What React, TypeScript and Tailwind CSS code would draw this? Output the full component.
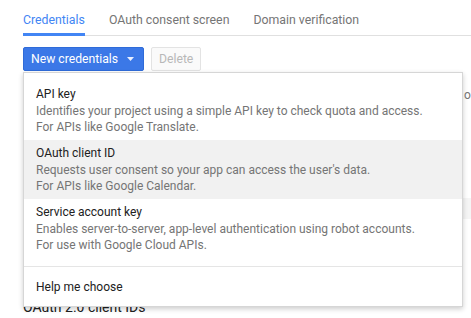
import React from "react";

const items = [
  {
    title: "API key",
    lines: [
      "Identifies your project using a simple API key to check quota and access.",
      "For APIs like Google Translate.",
    ],
    active: false,
  },
  {
    title: "OAuth client ID",
    lines: [
      "Requests user consent so your app can access the user's data.",
      "For APIs like Google Calendar.",
    ],
    active: true,
  },
  {
    title: "Service account key",
    lines: [
      "Enables server-to-server, app-level authentication using robot accounts.",
      "For use with Google Cloud APIs.",
    ],
    active: false,
  },
];

export default function App() {
  return (
    <div className="relative w-[471px] h-[318px] overflow-hidden bg-white font-['Roboto',sans-serif] pl-[23px]">
      {/* Tabs */}
      <div className="flex gap-[24px] border-b border-[#e0e0e0] text-[12.3px] leading-[16px]">
        <div className="pt-[12px] pb-[5px] border-b-[3px] border-[#4285f4] text-[#4285f4] -mb-px">
          Credentials
        </div>
        <div className="pt-[12px] pb-[5px] border-b-[3px] border-transparent text-[#757575] -mb-px">
          OAuth consent screen
        </div>
        <div className="pt-[12px] pb-[5px] border-b-[3px] border-transparent text-[#757575] -mb-px">
          Domain verification
        </div>
      </div>

      {/* Toolbar */}
      <div className="mt-[11px] flex gap-[7px] text-[12.2px]">
        <div className="h-[24px] w-[121px] flex items-center pl-[7px] rounded-[2px] bg-[#3b78e7] border border-[#2f6bd8] text-white">
          <span>New credentials</span>
          <svg className="ml-[9px]" width="7" height="4" viewBox="0 0 7 4">
            <path d="M0 0h7L3.5 4z" fill="#e8efff" />
          </svg>
        </div>
        <div className="h-[24px] w-[50px] flex items-center pl-[7px] rounded-[2px] bg-[#fafafa] border border-[#e3e3e3] text-[#b8b8b8]">
          Delete
        </div>
      </div>

      {/* Background content */}
      <p className="mt-[16px] pl-[441px] whitespace-nowrap text-[12px] leading-[16px] text-[#757575]">
        o
      </p>
      <div className="mt-[95px] h-[21px] bg-[#f5f5f5]" />
      <h2 className="mt-[78px] text-[14px] leading-[20px] text-[#212121]">
        OAuth 2.0 client IDs
      </h2>

      {/* Dropdown menu */}
      <div className="absolute left-[23px] top-[72px] w-[440px] bg-white border border-[#d6d6d6] shadow-[0_2px_5px_rgba(0,0,0,0.2)]">
        <div className="pt-[8px] pb-[8px]">
          {items.map((it) => (
            <div
              key={it.title}
              className={`pl-[12px] pt-[4px] pb-[5px] ${it.active ? "bg-[#f1f1f1]" : ""}`}
            >
              <div className="text-[12px] leading-[18px] text-[#212121]">{it.title}</div>
              {it.lines.map((l) => (
                <div key={l} className="text-[12px] leading-[16px] text-[#757575] whitespace-nowrap">
                  {l}
                </div>
              ))}
            </div>
          ))}
        </div>
        <div className="border-t border-[#e5e5e5] pl-[12px] pt-[11px] pb-[10px] text-[12px] leading-[18px] text-[#212121]">
          Help me choose
        </div>
      </div>
    </div>
  );
}
